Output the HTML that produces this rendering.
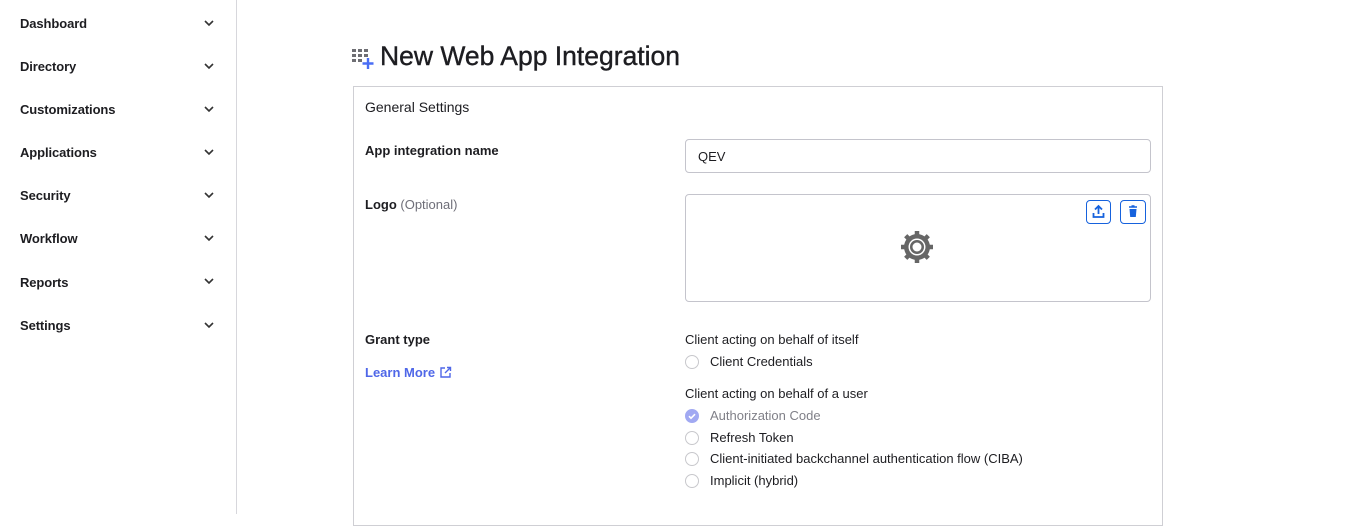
<!DOCTYPE html>
<html><head><style>
*{box-sizing:border-box;margin:0;padding:0}
body{width:1370px;height:514px;overflow:hidden;background:#fff;font-family:"Liberation Sans",sans-serif;color:#1d1d21;position:relative}
.side{position:absolute;left:0;top:0;width:237px;height:514px;border-right:1px solid #d7d7dc}
.nav{position:absolute;left:20px;font-size:13px;font-weight:bold;color:#1d1d21;letter-spacing:-0.1px}
.chev{position:absolute;left:203px;width:12px;height:8px}
h1{position:absolute;left:380px;top:41px;font-size:26.5px;font-weight:normal;color:#1d1d21;-webkit-text-stroke:0.4px #1d1d21}
.card{position:absolute;left:353px;top:86px;width:810px;height:440px;border:1px solid #cfcfd4}
.t{position:absolute;font-size:13px}
.b{font-weight:bold}
.inp{position:absolute;left:685px;top:139px;width:466px;height:34px;border:1px solid #c4c4cc;border-radius:4px;font-size:13px;padding:9px 12px}
.logo{position:absolute;left:685px;top:194px;width:466px;height:108px;border:1px solid #c4c4cc;border-radius:4px}
.ib{position:absolute;top:200px;width:25px;height:24px;border:1px solid #1662dd;border-radius:4px}
.cb{position:absolute;left:685px;width:14px;height:14px;border:1px solid #c8c8cc;border-radius:50%}
</style></head><body>
<div class="side">
<div class="nav" style="top:16px">Dashboard</div>
<div class="nav" style="top:59px">Directory</div>
<div class="nav" style="top:102px">Customizations</div>
<div class="nav" style="top:145px">Applications</div>
<div class="nav" style="top:188px">Security</div>
<div class="nav" style="top:231px">Workflow</div>
<div class="nav" style="top:275px">Reports</div>
<div class="nav" style="top:318px">Settings</div>
<svg class="chev" style="top:19px" viewBox="0 0 12 8"><path d="M2 2l4 4 4-4" stroke="#333" stroke-width="1.6" fill="none"/></svg>
<svg class="chev" style="top:62px" viewBox="0 0 12 8"><path d="M2 2l4 4 4-4" stroke="#333" stroke-width="1.6" fill="none"/></svg>
<svg class="chev" style="top:105px" viewBox="0 0 12 8"><path d="M2 2l4 4 4-4" stroke="#333" stroke-width="1.6" fill="none"/></svg>
<svg class="chev" style="top:148px" viewBox="0 0 12 8"><path d="M2 2l4 4 4-4" stroke="#333" stroke-width="1.6" fill="none"/></svg>
<svg class="chev" style="top:191px" viewBox="0 0 12 8"><path d="M2 2l4 4 4-4" stroke="#333" stroke-width="1.6" fill="none"/></svg>
<svg class="chev" style="top:234px" viewBox="0 0 12 8"><path d="M2 2l4 4 4-4" stroke="#333" stroke-width="1.6" fill="none"/></svg>
<svg class="chev" style="top:277px" viewBox="0 0 12 8"><path d="M2 2l4 4 4-4" stroke="#333" stroke-width="1.6" fill="none"/></svg>
<svg class="chev" style="top:321px" viewBox="0 0 12 8"><path d="M2 2l4 4 4-4" stroke="#333" stroke-width="1.6" fill="none"/></svg>
</div>
<svg style="position:absolute;left:352px;top:48px" width="24" height="22" viewBox="0 0 24 22">
<g fill="#6e6e73"><rect x="0" y="1" width="4" height="3"/><rect x="6" y="1" width="4" height="3"/><rect x="12" y="1" width="4" height="3"/><rect x="0" y="6" width="4" height="3"/><rect x="6" y="6" width="4" height="3"/><rect x="12" y="6" width="4" height="3"/><rect x="0" y="11" width="4" height="3"/><rect x="6" y="11" width="4" height="3"/></g>
<path d="M16 10v11M10.5 15.5h11" stroke="#4a6ef5" stroke-width="2.4"/></svg>
<h1>New Web App Integration</h1>
<div class="card"></div>
<div class="t" style="left:365px;top:99px;font-size:14px">General Settings</div>
<div class="t b" style="left:365px;top:143px">App integration name</div>
<div class="inp">QEV</div>
<div class="t" style="left:365px;top:197px"><b>Logo</b> <span style="color:#6e6e78">(Optional)</span></div>
<div class="logo"></div>
<div class="ib" style="left:1086px"><svg width="23" height="22" viewBox="0 0 23 22"><path d="M11.5 5v8M8 8.5l3.5-3.5 3.5 3.5M6.5 12v4h10v-4" stroke="#1662dd" stroke-width="1.8" fill="none"/></svg></div>
<div class="ib" style="left:1120px;width:26px"><svg width="24" height="22" viewBox="0 0 24 22"><path d="M8 6h8M10.5 5h3" stroke="#1662dd" stroke-width="1.6"/><path d="M8.5 8h7l-.7 8h-5.6z" fill="#1662dd"/></svg></div>
<svg style="position:absolute;left:900px;top:230px" width="34" height="34" viewBox="0 0 34 34"><g fill="#666"><circle cx="17" cy="17" r="13"/><g stroke="#666" stroke-width="4.5"><path d="M17 1v32M1 17h32M5.7 5.7l22.6 22.6M28.3 5.7L5.7 28.3"/></g></g><circle cx="17" cy="17" r="8.5" fill="#fff"/><circle cx="17" cy="17" r="7" fill="#666"/><circle cx="17" cy="17" r="4.5" fill="#fff"/></svg>
<div class="t b" style="left:365px;top:332px">Grant type</div>
<div class="t b" style="left:365px;top:365px;color:#4f67e8">Learn More</div>
<svg style="position:absolute;left:439px;top:366px" width="13" height="13" viewBox="0 0 13 13"><path d="M6 2H2v9h9V7M8 1.5h3.5V5M11.5 1.5L6 7" stroke="#4f67e8" stroke-width="1.4" fill="none"/></svg>
<div class="t" style="left:685px;top:332px">Client acting on behalf of itself</div>
<div class="cb" style="top:355px"></div><div class="t" style="left:710px;top:354px">Client Credentials</div>
<div class="t" style="left:685px;top:386px">Client acting on behalf of a user</div>
<div class="cb" style="top:409px;background:#a1a9f2;border-color:#a1a9f2"><svg width="12" height="12" viewBox="0 0 12 12" style="position:absolute;left:0;top:0"><path d="M3 6.2l2 2 4-4" stroke="#fff" stroke-width="1.6" fill="none"/></svg></div><div class="t" style="left:710px;top:408px;color:#808088">Authorization Code</div>
<div class="cb" style="top:431px"></div><div class="t" style="left:710px;top:430px">Refresh Token</div>
<div class="cb" style="top:452px"></div><div class="t" style="left:710px;top:451px">Client-initiated backchannel authentication flow (CIBA)</div>
<div class="cb" style="top:474px"></div><div class="t" style="left:710px;top:473px">Implicit (hybrid)</div>
</body></html>
